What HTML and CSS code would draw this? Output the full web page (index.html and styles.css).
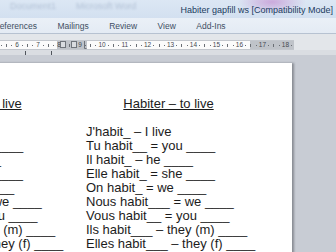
FILE: index.html
```html
<!DOCTYPE html>
<html>
<head>
<meta charset="utf-8">
<link rel="stylesheet" href="styles.css">
</head>
<body>
<div class="win">
  <div class="titlebar">
    <span class="ghost">Document1</span>
    <span class="ghost ghost2">Microsoft Word</span>
    <span class="title">Habiter gapfill ws [Compatibility Mode]</span>
  </div>
  <div class="tabs">
    <span class="tab">References</span>
    <span class="tab">Mailings</span>
    <span class="tab">Review</span>
    <span class="tab">View</span>
    <span class="tab">Add-Ins</span>
  </div>
  <div class="rulerzone">
    <div class="ruler">
      <div class="track">
        <span class="cm"><span class="num">5</span><span class="s"><i class="dot"></i></span><span class="s"><i class="tick"></i></span><span class="s"><i class="dot"></i></span></span>
        <span class="cm"><span class="num">6</span><span class="s"><i class="dot"></i></span><span class="s"><i class="tick"></i></span><span class="s"><i class="dot"></i></span></span>
        <span class="cm"><span class="num">7</span><span class="s"><i class="dot"></i></span><span class="s"><i class="tick"></i></span><span class="s"><i class="dot"></i></span></span>
        <span class="cm"><span class="num">8</span><span class="s"><i class="dot"></i></span><span class="s"><i class="tick"></i></span><span class="s"><i class="dot"></i></span></span>
        <span class="cm"><span class="num">9</span><span class="s"><i class="dot"></i></span><span class="s"><i class="tick"></i></span><span class="s"><i class="dot"></i></span></span>
        <span class="cm"><span class="num">10</span><span class="s"><i class="dot"></i></span><span class="s"><i class="tick"></i></span><span class="s"><i class="dot"></i></span></span>
        <span class="cm"><span class="num">11</span><span class="s"><i class="dot"></i></span><span class="s"><i class="tick"></i></span><span class="s"><i class="dot"></i></span></span>
        <span class="cm"><span class="num">12</span><span class="s"><i class="dot"></i></span><span class="s"><i class="tick"></i></span><span class="s"><i class="dot"></i></span></span>
        <span class="cm"><span class="num">13</span><span class="s"><i class="dot"></i></span><span class="s"><i class="tick"></i></span><span class="s"><i class="dot"></i></span></span>
        <span class="cm"><span class="num">14</span><span class="s"><i class="dot"></i></span><span class="s"><i class="tick"></i></span><span class="s"><i class="dot"></i></span></span>
        <span class="cm"><span class="num">15</span><span class="s"><i class="dot"></i></span><span class="s"><i class="tick"></i></span><span class="s"><i class="dot"></i></span></span>
        <span class="cm"><span class="num">16</span><span class="s"><i class="dot"></i></span><span class="s"><i class="tick"></i></span><span class="s"><i class="dot"></i></span></span>
        <span class="cm"><span class="num">17</span><span class="s"><i class="dot"></i></span><span class="s"><i class="tick"></i></span><span class="s"><i class="dot"></i></span></span>
        <span class="cm"><span class="num">18</span><span class="s"><i class="dot"></i></span><span class="s"><i class="tick"></i></span><span class="s"><i class="dot"></i></span></span>
        <span class="cm"><span class="num">19</span><span class="s"><i class="dot"></i></span><span class="s"><i class="tick"></i></span><span class="s"><i class="dot"></i></span></span>
      </div>
      <svg class="colmark" width="32" height="9" viewBox="0 0 32 9">
        <rect x="3.5" y="1.5" width="5" height="6" fill="#d9dce0" stroke="#6f747b"/>
        <rect x="14.5" y="1.5" width="5" height="6" fill="#d9dce0" stroke="#6f747b"/>
        <path d="M29.5 0.5 H27.5 V8.5 H29.5" fill="none" stroke="#6f747b"/>
      </svg>
    </div>
    <div class="stops">
      <i class="stop s1"></i>
      <i class="stop s2"></i>
    </div>
  </div>
  <div class="workspace">
    <div class="page">
      <div class="col">
        <div class="head">Habiter – to live</div>
        <div class="row">J'habit_ – I live</div>
        <div class="row">Tu habit__ = you ____</div>
        <div class="row">Il habit_ – he ____</div>
        <div class="row">Elle habit_ = she ____</div>
        <div class="row">On habit_ = we ____</div>
        <div class="row">Nous habit___ = we ____</div>
        <div class="row">Vous habit__ = you ____</div>
        <div class="row">Ils habit___ – they (m) ____</div>
        <div class="row">Elles habit___ – they (f) ____</div>
      </div>
      <div class="col">
        <div class="head">Habiter – to live</div>
        <div class="row">J'habit_ – I live</div>
        <div class="row">Tu habit__ = you ____</div>
        <div class="row">Il habit_ – he ____</div>
        <div class="row">Elle habit_ = she ____</div>
        <div class="row">On habit_ = we ____</div>
        <div class="row">Nous habit___ = we ____</div>
        <div class="row">Vous habit__ = you ____</div>
        <div class="row">Ils habit___ – they (m) ____</div>
        <div class="row">Elles habit___ – they (f) ____</div>
      </div>
    </div>
  </div>
</div>
</body>
</html>
```
FILE: styles.css
```css
html, body {
  margin: 0;
  padding: 0;
}
body {
  width: 336px;
  height: 252px;
  overflow: hidden;
  background: #c8ccd4;
  font-family: "Liberation Sans", Arial, sans-serif;
}
.win {
  display: flex;
  flex-direction: column;
  width: 336px;
  height: 252px;
  overflow: hidden;
}
.titlebar {
  height: 18px;
  flex: 0 0 18px;
  display: flex;
  align-items: center;
  background:
    radial-gradient(ellipse 34px 12px at 272px 2px, rgba(190,120,200,0.55), rgba(190,120,200,0) 100%),
    linear-gradient(#dce7f4, #d3e0f0);
  overflow: hidden;
}
.ghost {
  font-size: 9px;
  color: rgba(130,150,180,0.45);
  filter: blur(1.2px);
  margin-left: 10px;
  margin-top: -6px;
}
.ghost2 {
  margin-left: 20px;
}
.title {
  margin-left: auto;
  margin-right: 3px;
  margin-top: 1px;
  font-size: 9px;
  color: #213c5f;
  white-space: nowrap;
}
.tabs {
  height: 15px;
  flex: 0 0 15px;
  display: flex;
  align-items: center;
  gap: 20.5px;
  margin-left: -6.5px;
  background: linear-gradient(#eaf0f7, #e4ebf4);
  border-bottom: 1px solid #b7c2d1;
}
.tab {
  font-size: 8.5px;
  color: #3e4e63;
  white-space: nowrap;
}
.rulerzone {
  flex: 0 0 20px;
  height: 20px;
  background: #e3e6ea;
  display: flex;
  flex-direction: column;
  padding-top: 6px;
  box-sizing: border-box;
}
.ruler {
  position: relative;
  width: 294px;
  height: 8px;
  flex: 0 0 8px;
  overflow: hidden;
  background: linear-gradient(to right, #fbfbfb 0 57px, #bfc3c9 57px 87px, #fbfbfb 87px 250px, #bfc3c9 250px 294px);
  border-top: 1px solid #c3c7cd;
  border-bottom: 1px solid #c3c7cd;
  box-sizing: content-box;
}
.track {
  display: flex;
  margin-left: -6.6px;
  height: 8px;
}
.cm {
  flex: 0 0 21px;
  display: flex;
  height: 8px;
}
.num, .s {
  flex: 0 0 5.25px;
  display: flex;
  align-items: center;
  justify-content: center;
}
.num {
  font-size: 6.5px;
  color: #45494f;
  line-height: 8px;
  white-space: nowrap;
}
.dot {
  width: 1px;
  height: 1px;
  background: #6a6e74;
}
.tick {
  width: 1px;
  height: 3px;
  background: #6a6e74;
}
.colmark {
  position: absolute;
  left: 57px;
  top: -1px;
}
.stops {
  position: relative;
  flex: 0 0 5px;
  height: 5px;
  background: #dadde2;
}
.stop {
  position: absolute;
  top: 1px;
  width: 1px;
  height: 4px;
  background: #50555c;
}
.s1 { left: 25px; }
.s2 { left: 51px; }
.workspace {
  flex: 1 1 auto;
  background: #c8ccd4;
  padding-top: 9px;
  overflow: hidden;
}
.page {
  width: 357px;
  margin-left: -140px;
  height: 300px;
  background: #ffffff;
  box-shadow: 2px 0 2px rgba(60,64,72,0.45);
  padding: 34px 41px 0 34px;
  display: flex;
  gap: 27px;
  font-family: "Liberation Sans", Arial, sans-serif;
  font-size: 13px;
  line-height: 14px;
  color: #1c1c1c;
}
.col {
  flex: 0 0 165px;
  width: 165px;
  white-space: nowrap;
}
.head {
  text-align: center;
  text-decoration: underline;
  margin-bottom: 14px;
}
.row {
  height: 14px;
}
```
